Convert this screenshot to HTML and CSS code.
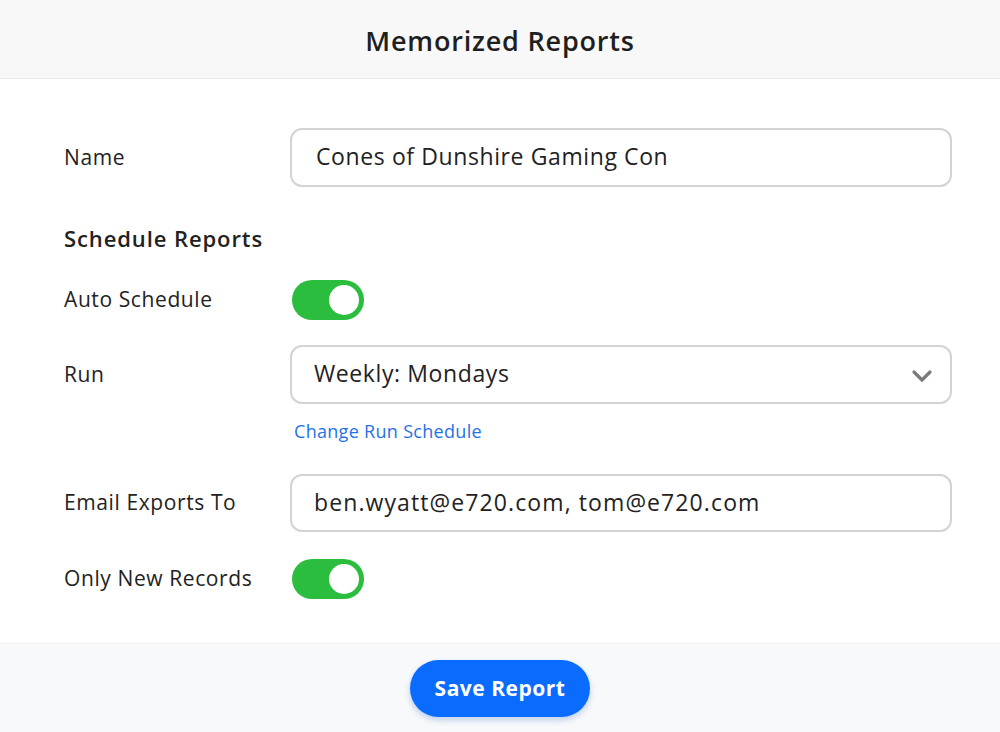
FILE: index.html
```html
<!DOCTYPE html>
<html lang="en">
<head>
<meta charset="utf-8">
<title>Memorized Reports</title>
<link rel="stylesheet" href="styles.css">
</head>
<body>
<div class="page">
  <header class="header">
    <h1 class="title">Memorized Reports</h1>
  </header>
  <main class="form">
    <div class="row row-name">
      <label class="label">Name</label>
      <div class="field">Cones of Dunshire Gaming Con</div>
    </div>
    <h2 class="section">Schedule Reports</h2>
    <div class="row row-auto">
      <span class="label">Auto Schedule</span>
      <div class="toggle"><span class="knob"></span></div>
    </div>
    <div class="row row-run">
      <span class="label">Run</span>
      <div class="field select">
        <span class="select-text">Weekly: Mondays</span>
        <svg class="chevron" width="22" height="14" viewBox="0 0 22 14"><path d="M3 3 L11 11 L19 3" fill="none" stroke="#7a7a7a" stroke-width="3.2" stroke-linecap="round" stroke-linejoin="round"/></svg>
      </div>
    </div>
    <div class="row row-link">
      <span></span>
      <a class="link" href="#">Change Run Schedule</a>
    </div>
    <div class="row row-email">
      <span class="label">Email Exports To</span>
      <div class="field">ben.wyatt@e720.com, tom@e720.com</div>
    </div>
    <div class="row row-only">
      <span class="label">Only New Records</span>
      <div class="toggle"><span class="knob"></span></div>
    </div>
  </main>
  <footer class="footer">
    <button class="save">Save Report</button>
  </footer>
</div>
</body>
</html>
```
FILE: styles.css
```css
* { box-sizing: border-box; }
html, body { margin: 0; padding: 0; }
body {
  font-family: "Open Sans", "Noto Sans", sans-serif;
  color: #222;
  background: #fff;
}
.page {
  width: 1000px;
  height: 732px;
  display: flex;
  flex-direction: column;
}
.header {
  height: 79px;
  background: #f8f8f8;
  border-bottom: 1px solid #ececec;
  display: flex;
  align-items: center;
  justify-content: center;
}
.title {
  margin: 0;
  font-size: 27px;
  font-weight: 600;
  letter-spacing: 0.8px;
  color: #1f1f1f;
  padding-top: 2px;
}
.form {
  flex: 1;
  padding: 49px 48px 0 64px;
}
.row {
  display: grid;
  grid-template-columns: 226px 1fr;
  align-items: center;
}
.label {
  font-size: 21px;
  letter-spacing: 0.6px;
  color: #222;
  margin-top: -2px;
}
.field {
  height: 59px;
  border: 2px solid #d3d3d3;
  border-radius: 12px;
  display: flex;
  align-items: center;
  padding: 0 24px 3px;
  font-size: 23px;
  letter-spacing: 0.6px;
  color: #222;
}
.row-email .field { height: 58px; padding-left: 22px; padding-bottom: 2px; letter-spacing: 1.1px; }
.select {
  justify-content: space-between;
  padding-left: 22px;
  padding-right: 17px;
  padding-bottom: 4px;
}
.chevron { display: block; margin-top: 6px; }
.section {
  margin: 37px 0 0;
  font-size: 22px;
  font-weight: 600;
  letter-spacing: 0.9px;
  line-height: 28px;
  color: #222;
}
.row-auto { margin-top: 28px; }
.row-run { margin-top: 25px; }
.row-link { margin-top: 16px; }
.row-email { margin-top: 32px; }
.row-only { margin-top: 27px; }
.toggle {
  width: 72px;
  height: 40px;
  border-radius: 20px;
  background: #2bbd3e;
  margin-left: 2px;
  display: flex;
  align-items: center;
  justify-content: flex-end;
  padding-right: 5px;
}
.knob {
  width: 30px;
  height: 30px;
  border-radius: 50%;
  background: #fff;
}
.link {
  font-size: 18px;
  letter-spacing: 0.3px;
  line-height: 22px;
  color: #1f72e6;
  text-decoration: none;
  margin-left: 4px;
}
.footer {
  height: 89px;
  background: #f8f9fa;
  border-top: 1px solid #efefef;
  display: flex;
  justify-content: center;
  padding-top: 16px;
}
.save {
  width: 180px;
  height: 57px;
  border: none;
  border-radius: 29px;
  background: #0a6cff;
  color: #fff;
  font-family: "Open Sans", "Noto Sans", sans-serif;
  font-size: 21px;
  letter-spacing: 0.5px;
  font-weight: 700;
  padding-bottom: 3px;
  box-shadow: 0 3px 6px rgba(10, 80, 200, 0.25);
}
```
